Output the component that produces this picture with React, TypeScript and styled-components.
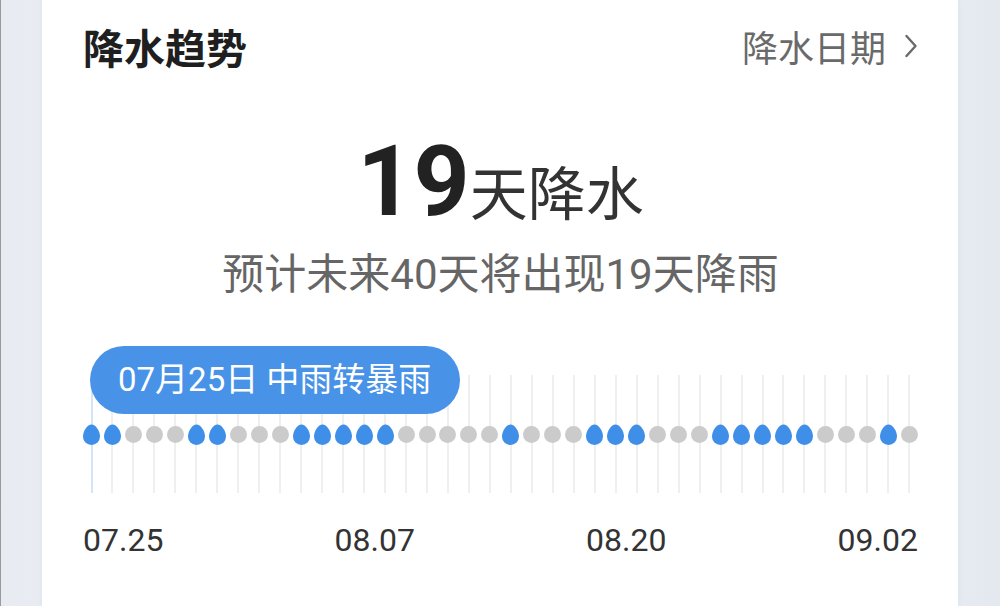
import React from "react";
import styled, { createGlobalStyle } from "styled-components";

const GlobalStyle = createGlobalStyle`
  html, body {
    margin: 0;
    padding: 0;
    background: #e9edf3;
  }
  body {
    font-family: Roboto, "Noto Sans CJK SC", "Noto Sans", sans-serif;
  }
`;

const Page = styled.div`
  display: flex;
  height: 606px;
  overflow: hidden;
  border-left: 1px solid #9a9a9a;
  padding: 0 42px 0 41px;
  background: linear-gradient(90deg, #e8ecf2 0%, #eef1f6 80%, #e4e9f0 100%);
`;

const Card = styled.section`
  flex: 1;
  background: #ffffff;
  padding: 18px 40px 0 41px;
  box-shadow: 0 0 6px rgba(40, 60, 90, 0.06);
`;

const Header = styled.header`
  display: flex;
  align-items: center;
  justify-content: space-between;
  height: 56px;
`;

const Title = styled.h2`
  margin: 0;
  font-family: "Noto Sans CJK SC", sans-serif;
  font-size: 41px;
  font-weight: 700;
  color: #1f1f1f;
  line-height: 56px;
`;

const DateLink = styled.a`
  display: flex;
  align-items: center;
  gap: 18px;
  font-family: "Noto Sans CJK SC", sans-serif;
  font-size: 36px;
  color: #6a6a6a;
  line-height: 56px;
  text-decoration: none;
`;

const Hero = styled.div`
  display: flex;
  justify-content: center;
  align-items: baseline;
  margin-top: 59px;
  height: 98px;
`;

const Count = styled.span`
  font-family: Roboto, sans-serif;
  font-size: 98px;
  font-weight: 700;
  line-height: 98px;
  color: #222222;
`;

const Unit = styled.span`
  font-family: "Noto Sans CJK SC", sans-serif;
  font-size: 58px;
  line-height: 58px;
  color: #333333;
`;

const Summary = styled.p`
  margin: 23px 0 0;
  text-align: center;
  font-family: Roboto, "Noto Sans CJK SC", sans-serif;
  font-size: 42px;
  line-height: 42px;
  color: #666666;
`;

const Chart = styled.div`
  position: relative;
  margin-top: 50px;
  padding-top: 29px;
`;

const Columns = styled.div`
  display: flex;
  justify-content: space-between;
  height: 118px;
`;

const Column = styled.div<{ $active: boolean }>`
  position: relative;
  width: 17px;
  display: flex;
  align-items: center;
  justify-content: center;

  &::before {
    content: "";
    position: absolute;
    top: 0;
    bottom: 0;
    left: 50%;
    width: 2px;
    margin-left: -1px;
    background: ${(p) => (p.$active ? "#d3e4f8" : "#efefef")};
  }
`;

const Dot = styled.span`
  position: relative;
  width: 17px;
  height: 17px;
  border-radius: 50%;
  background: #cbcbcb;
`;

const DropIcon = styled.svg`
  position: relative;
  display: block;
`;

const Tooltip = styled.div`
  position: absolute;
  top: 0;
  left: 7px;
  height: 68px;
  padding: 0 29px 0 28px;
  border-radius: 34px;
  background: #4893e7;
  color: #ffffff;
  font-family: Roboto, "Noto Sans CJK SC", sans-serif;
  font-size: 33px;
  line-height: 68px;
  white-space: nowrap;
`;

const Axis = styled.div`
  display: flex;
  justify-content: space-between;
  margin-top: 31px;
`;

const AxisLabel = styled.span`
  font-family: Roboto, sans-serif;
  font-size: 32px;
  line-height: 32px;
  color: #333333;
`;

const Chevron = () => (
  <svg width="14" height="24" viewBox="0 0 14 24" fill="none">
    <path d="M2.5 2 L11.5 12 L2.5 22" stroke="#6a6a6a" strokeWidth="2.4" strokeLinecap="round" strokeLinejoin="round" />
  </svg>
);

// Egg-shaped rain drop: softly narrowed top, round belly
const Drop = () => (
  <DropIcon width="17" height="21" viewBox="0 0 17 21">
    <path
      d="M8.5 0.5 C12.6 0.5 17 7 17 12.5 A8.5 8.5 0 0 1 0 12.5 C0 7 4.4 0.5 8.5 0.5 Z"
      fill="#3f8fe8"
    />
  </DropIcon>
);

// 1 = rain day, 0 = dry day, for 40 days starting 07.25
const days = [
  1, 1, 0, 0, 0, 1, 1, 0, 0, 0,
  1, 1, 1, 1, 1, 0, 0, 0, 0, 0,
  1, 0, 0, 0, 1, 1, 1, 0, 0, 0,
  1, 1, 1, 1, 1, 0, 0, 0, 1, 0,
];

const ticks = ["07.25", "08.07", "08.20", "09.02"];

export default function App() {
  return (
    <>
      <GlobalStyle />
      <Page>
        <Card>
          <Header>
            <Title>降水趋势</Title>
            <DateLink href="#">
              降水日期
              <Chevron />
            </DateLink>
          </Header>

          <Hero>
            <Count>19</Count>
            <Unit>天降水</Unit>
          </Hero>

          <Summary>预计未来40天将出现19天降雨</Summary>

          <Chart>
            <Columns>
              {days.map((rain, i) => (
                <Column key={i} $active={i === 0}>
                  {rain ? <Drop /> : <Dot />}
                </Column>
              ))}
            </Columns>
            <Tooltip>07月25日 中雨转暴雨</Tooltip>
            <Axis>
              {ticks.map((t) => (
                <AxisLabel key={t}>{t}</AxisLabel>
              ))}
            </Axis>
          </Chart>
        </Card>
      </Page>
    </>
  );
}
